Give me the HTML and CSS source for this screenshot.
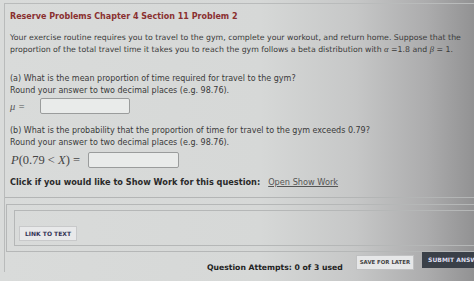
FILE: index.html
```html
<!DOCTYPE html>
<html>
<head>
<meta charset="utf-8">
<link rel="stylesheet" href="styles.css">
</head>
<body>
<div class="page">
  <div class="frame">
    <h1 class="title">Reserve Problems Chapter 4 Section 11 Problem 2</h1>
    <p class="intro">Your exercise routine requires you to travel to the gym, complete your workout, and return home. Suppose that the proportion of the total travel time it takes you to reach the gym follows a beta distribution with <span class="math">α</span> =1.8 and <span class="math">β</span> = 1.</p>
    <div class="part part-a">
      <p class="q">(a) What is the mean proportion of time required for travel to the gym?<br>Round your answer to two decimal places (e.g. 98.76).</p>
      <div class="answer"><span class="lbl-mu">μ =</span><span class="input in-a"></span></div>
    </div>
    <div class="part part-b">
      <p class="q">(b) What is the probability that the proportion of time for travel to the gym exceeds 0.79?<br>Round your answer to two decimal places (e.g. 98.76).</p>
      <div class="answer"><span class="lbl-p"><i>P</i>(0.79 &lt; <i>X</i>) =</span><span class="input in-b"></span></div>
    </div>
    <div class="showwork"><b>Click if you would like to Show Work for this question:</b><a class="link">Open Show Work</a></div>
    <div class="rule"></div>
    <div class="outer-box">
      <div class="inner-box"><span class="btn-link">LINK TO TEXT</span></div>
    </div>
    <div class="footer">
      <span class="attempts">Question Attempts: 0 of 3 used</span>
      <span class="btn-save">SAVE FOR LATER</span>
      <span class="btn-submit">SUBMIT ANSWER</span>
    </div>
  </div>
</div>
</body>
</html>
```
FILE: styles.css
```css
html, body { margin: 0; padding: 0; }
body {
  width: 474px; height: 281px; overflow: hidden;
  background: linear-gradient(90deg, #d9dbda 0%, #d6d8d7 55%, #c6c7c7 75%, #acacad 90%, #929293 100%);
  font-family: "DejaVu Sans", Verdana, sans-serif;
  color: #333;
}
.page { padding: 3px 0 0 4px; overflow: hidden; }
.frame {
  border-top: 1px solid #b9bbbb;
  border-left: 1px solid #b9bbbb;
  padding: 0 0 0 5px;
}
.title {
  margin: 8px 0 0 0;
  font-size: 8px; font-weight: bold; line-height: 10px;
  color: #8a3030;
}
.intro {
  margin: 10px 0 0 0;
  font-size: 7.8px; line-height: 12px;
  color: #3a3a3a;
  width: 462px;
}
.math { font-family: "Liberation Serif", serif; font-style: italic; font-size: 8.6px; line-height: 8px; }
.part-a { margin-top: 17px; }
.q { margin: 0; font-size: 8px; line-height: 12px; color: #3a3a3a; white-space: nowrap; }
.answer { display: flex; align-items: center; }
.part-a .answer { margin-top: 1px; }
.lbl-mu { font-family: "Liberation Serif", serif; font-style: italic; font-size: 10.5px; color: #555; width: 30px; }
.lbl-p { font-family: "Liberation Serif", serif; font-size: 12.5px; color: #444; width: 77px; margin-left: 1px; }
.input {
  display: inline-block; height: 14px;
  border: 1px solid #9a9c9c; border-radius: 2px;
  background: #e9ebea;
}
.in-a { width: 88px; }
.in-b { width: 89px; height: 14px; }
.part-b { margin-top: 11px; }
.part-b .answer { margin-top: 3px; }
.showwork { margin-top: 9px; font-size: 8.2px; color: #2a2a2a; display: flex; white-space: nowrap; }
.link { margin-left: 8px; text-decoration: underline; font-weight: normal; color: #555; }
.rule { margin-top: 10px; margin-left: -5px; border-top: 1px solid #b3b5b5; }
.outer-box {
  margin-top: 6px; margin-left: -4px;
  border: 1px solid #b5b7b7; border-right: none;
  padding: 5px 0 5px 7px;
}
.inner-box {
  border: 1px solid #b5b7b7; border-right: none;
  padding: 10px 0 11px 4px; height: 13px;
}
.btn-link {
  display: inline-block; font-size: 6px; font-weight: bold; color: #333355; line-height: 7px;
  background: #e8e9ea; border: 1px solid #c8c9ca; padding: 3px 5px;
}
.footer { display: flex; align-items: flex-start; margin-top: -1px; padding-left: 197px; white-space: nowrap; overflow: hidden; }
.attempts { font-size: 7.7px; font-weight: bold; color: #222; margin-top: 12px; }
.btn-save {
  margin-left: 13px; margin-top: 4px;
  font-size: 5.4px; font-weight: bold; color: #444; line-height: 7px;
  background: #e6e7e8; border: 1px solid #c0c1c2; padding: 3px 3px;
}
.btn-submit {
  margin-left: 8px; margin-top: 1px;
  font-size: 6px; font-weight: bold; color: #dde; line-height: 8px;
  background: #3a4048; padding: 4px 6px;
}
```
